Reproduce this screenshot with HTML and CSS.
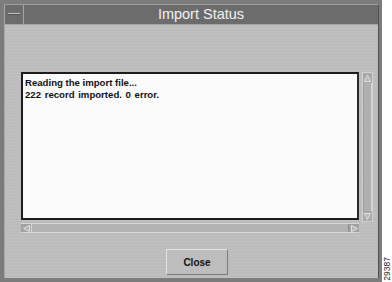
FILE: index.html
```html
<!DOCTYPE html>
<html>
<head>
<meta charset="utf-8">
<title>Import Status</title>
<link rel="stylesheet" href="styles.css">
</head>
<body>
<div class="window">
  <div class="inner">
    <div class="titlebar">
      <div class="menu-btn"><span class="dash"></span></div>
      <div class="title">Import Status</div>
    </div>
    <div class="content">
      <div class="scroll-grid">
        <div class="textarea">
          <div class="line">Reading the import file...</div>
          <div class="line">222 record imported. 0 error.</div>
        </div>
        <div class="vscroll">
          <div class="arrow">
            <svg width="9" height="9" viewBox="0 0 9 9"><path d="M4.5 1.5 L7.5 7.5 L1.5 7.5 Z" fill="#b4b4b4" stroke="#e2e2e2" stroke-width="1"/></svg>
          </div>
          <div class="vtrough"></div>
          <div class="arrow">
            <svg width="9" height="9" viewBox="0 0 9 9"><path d="M4.5 7.5 L7.5 1.5 L1.5 1.5 Z" fill="#b4b4b4" stroke="#e2e2e2" stroke-width="1"/></svg>
          </div>
        </div>
        <div class="hscroll">
          <div class="arrow h">
            <svg width="9" height="9" viewBox="0 0 9 9"><path d="M1.5 4.5 L7.5 1.5 L7.5 7.5 Z" fill="#b4b4b4" stroke="#e2e2e2" stroke-width="1"/></svg>
          </div>
          <div class="htrough"></div>
          <div class="arrow h">
            <svg width="9" height="9" viewBox="0 0 9 9"><path d="M7.5 4.5 L1.5 1.5 L1.5 7.5 Z" fill="#b4b4b4" stroke="#e2e2e2" stroke-width="1"/></svg>
          </div>
        </div>
      </div>
      <div class="actions">
        <button class="btn" type="button">Close</button>
      </div>
    </div>
  </div>
</div>
<div class="figno">29387</div>
</body>
</html>
```
FILE: styles.css
```css
html, body {
  margin: 0;
  padding: 0;
  background: #ffffff;
}
body {
  position: relative;
  width: 392px;
  height: 282px;
  overflow: hidden;
  font-family: "Liberation Sans", Arial, sans-serif;
}
.window {
  box-sizing: border-box;
  width: 382px;
  height: 282px;
  background: #7c7c7c;
  padding: 4px 3px 4px 4px;
  display: flex;
}
.inner {
  flex: 1;
  display: flex;
  flex-direction: column;
  border-left: 1px solid #a8a8a8;
  border-top: 1px solid #a0a0a0;
  border-right: 1px solid #4e4e4e;
}
.titlebar {
  height: 19px;
  display: flex;
  background: #6c6c6c;
  border-bottom: 1px solid #a4a4a4;
}
.menu-btn {
  width: 18px;
  border-right: 1px solid #a4a4a4;
  display: flex;
  align-items: center;
  justify-content: center;
}
.dash {
  display: block;
  width: 12px;
  height: 1px;
  background: #c4c4c4;
  box-shadow: 0 1px 0 #505050;
  margin-top: -2px;
}
.title {
  flex: 1;
  text-align: center;
  color: #f2f2f2;
  font-size: 14.5px;
  line-height: 19px;
}
.content {
  flex: 1;
  background: #bcbcbc;
  background-image: repeating-linear-gradient(180deg, rgba(255,255,255,0.06) 0 1px, rgba(0,0,0,0) 1px 3px);
  padding: 47px 0 0 16px;
}
.scroll-grid {
  display: grid;
  grid-template-columns: 338px 11px;
  grid-template-rows: 150px 10px;
  column-gap: 3px;
  row-gap: 1px;
}
.textarea {
  box-sizing: border-box;
  height: 148px;
  background: #fbfbfb;
  border: 2px solid #1c1c1c;
  border-right-color: #2a2a2a;
  padding: 3px 0 0 2px;
  font-size: 9.6px;
  font-weight: bold;
  color: #111;
  line-height: 11.5px;
}
.line:last-child {
  word-spacing: 1px;
}
.vscroll {
  display: flex;
  flex-direction: column;
  border: 1px solid #d2d2d2;
  background: #b2b2b2;
}
.arrow {
  height: 10px;
  display: flex;
  align-items: center;
  justify-content: center;
  background: #a9a9a9;
}
.arrow svg {
  display: block;
}
.vtrough {
  flex: 1;
  border-left: 1px solid #9a9a9a;
  border-right: 1px solid #d6d6d6;
  background: #b0b0b0;
}
.hscroll {
  display: flex;
  border-top: 1px solid #d6d6d6;
  border-bottom: 1px solid #d6d6d6;
  background: #b0b0b0;
  height: 10px;
  box-sizing: border-box;
}
.arrow.h {
  width: 10px;
  height: auto;
  background: #a2a2a2;
}
.htrough {
  flex: 1;
  border-left: 1px solid #d8d8d8;
  border-right: 1px solid #8e8e8e;
  background: #b3b3b3;
}
.actions {
  margin-top: 16px;
  padding-left: 145px;
}
.btn {
  box-sizing: border-box;
  width: 62px;
  height: 26px;
  margin: 0;
  padding: 0;
  background: #bdbdbd;
  border: 1px solid;
  border-color: #e4e4e4 #7c7c7c #7c7c7c #e4e4e4;
  font-family: "Liberation Sans", Arial, sans-serif;
  font-size: 10px;
  font-weight: bold;
  color: #111;
}
.figno {
  position: absolute;
  left: 383px;
  top: 257px;
  writing-mode: vertical-rl;
  transform: rotate(180deg);
  font-size: 8.5px;
  line-height: 9px;
  color: #222;
}
```
